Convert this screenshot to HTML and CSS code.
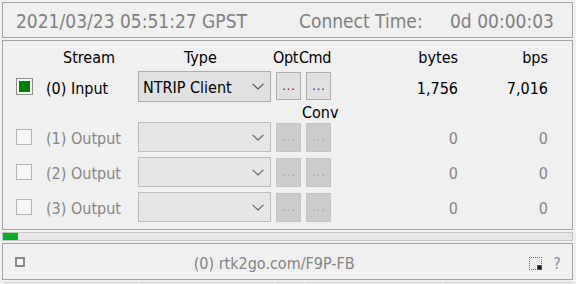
FILE: index.html
```html
<!DOCTYPE html>
<html>
<head>
<meta charset="utf-8">
<link rel="stylesheet" href="styles.css">
</head>
<body>
<div class="app">
  <div class="panel top">
    <span class="time">2021/03/23 05:51:27 GPST</span>
    <span class="ct">Connect Time:</span>
    <span class="elapsed">0d 00:00:03</span>
  </div>

  <div class="panel main">
    <div class="grid">
      <div class="h h-stream">Stream</div>
      <div class="h h-type">Type</div>
      <div class="h h-optcmd"><span class="opt">Opt</span><span>Cmd</span></div>
      <div class="h h-num c6">bytes</div>
      <div class="h h-num c7">bps</div>

      <div class="cb on r2"></div>
      <div class="lbl r2">(0) Input</div>
      <div class="combo r2"><span>NTRIP Client</span><svg width="12" height="7" viewBox="0 0 12 7"><path d="M0.5 0.8 L6 6 L11.5 0.8" stroke="#505050" stroke-width="1.1" fill="none"/></svg></div>
      <div class="btn r2 c4">...</div>
      <div class="btn r2 c5">...</div>
      <div class="num r2 c6">1,756</div>
      <div class="num r2 c7">7,016</div>

      <div class="conv">Conv</div>

      <div class="cb r4"></div>
      <div class="lbl dis r4">(1) Output</div>
      <div class="combo dis r4"><span></span><svg width="12" height="7" viewBox="0 0 12 7"><path d="M0.5 0.8 L6 6 L11.5 0.8" stroke="#606060" stroke-width="1.1" fill="none"/></svg></div>
      <div class="btn dis r4 c4">...</div>
      <div class="btn dis r4 c5">...</div>
      <div class="num dis r4 c6">0</div>
      <div class="num dis r4 c7">0</div>

      <div class="cb r5"></div>
      <div class="lbl dis r5">(2) Output</div>
      <div class="combo dis r5"><span></span><svg width="12" height="7" viewBox="0 0 12 7"><path d="M0.5 0.8 L6 6 L11.5 0.8" stroke="#606060" stroke-width="1.1" fill="none"/></svg></div>
      <div class="btn dis r5 c4">...</div>
      <div class="btn dis r5 c5">...</div>
      <div class="num dis r5 c6">0</div>
      <div class="num dis r5 c7">0</div>

      <div class="cb r6"></div>
      <div class="lbl dis r6">(3) Output</div>
      <div class="combo dis r6"><span></span><svg width="12" height="7" viewBox="0 0 12 7"><path d="M0.5 0.8 L6 6 L11.5 0.8" stroke="#606060" stroke-width="1.1" fill="none"/></svg></div>
      <div class="btn dis r6 c4">...</div>
      <div class="btn dis r6 c5">...</div>
      <div class="num dis r6 c6">0</div>
      <div class="num dis r6 c7">0</div>
    </div>
  </div>

  <div class="progress"><div class="fill" style="width:15px"></div></div>

  <div class="panel bottom">
    <span class="sq"></span>
    <span class="url">(0) rtk2go.com/F9P-FB</span>
    <svg class="winicon" width="13" height="13" viewBox="0 0 13 13">
      <g fill="#6a6a6a">
        <rect x="0" y="0" width="1" height="1"/><rect x="2" y="0" width="1" height="1"/><rect x="4" y="0" width="1" height="1"/><rect x="6" y="0" width="1" height="1"/><rect x="8" y="0" width="1" height="1"/><rect x="10" y="0" width="1" height="1"/><rect x="12" y="0" width="1" height="1"/>
        <rect x="0" y="2" width="1" height="1"/><rect x="0" y="4" width="1" height="1"/><rect x="0" y="6" width="1" height="1"/><rect x="0" y="8" width="1" height="1"/><rect x="0" y="10" width="1" height="1"/><rect x="0" y="12" width="1" height="1"/>
        <rect x="12" y="2" width="1" height="1"/><rect x="12" y="4" width="1" height="1"/><rect x="12" y="6" width="1" height="1"/>
        <rect x="2" y="12" width="1" height="1"/><rect x="4" y="12" width="1" height="1"/><rect x="6" y="12" width="1" height="1"/>
      </g>
      <rect x="8.5" y="8.5" width="4" height="4" fill="#111" stroke="#555" stroke-width="1"/>
    </svg>
    <span class="help">?</span>
  </div>

  <div class="status">
    <span class="seg s1"></span><span class="seg s2"></span><span class="seg s3"></span><span class="seg s4"></span><span class="seg s5"></span>
  </div>
</div>
</body>
</html>
```

FILE: styles.css
```css
html, body {
  margin: 0;
  padding: 0;
}
body {
  width: 576px;
  height: 284px;
  overflow: hidden;
  background: #f0f0f0;
  font-family: "DejaVu Sans Condensed", "DejaVu Sans", sans-serif;
  font-stretch: condensed;
  font-size: 16px;
  color: #000;
}
.app {
  padding: 2px 3px 0 2px;
}
.panel {
  border: 1px solid #a3a3a3;
  box-sizing: border-box;
}
.top {
  height: 36px;
  display: flex;
  align-items: center;
  color: #808080;
  font-size: 19px;
  padding-left: 13px;
  padding-top: 1px;
  margin-bottom: 2px;
}
.top .time { width: 283px; }
.top .ct { width: 151px; }

.main {
  height: 190px;
  padding: 0 0 2px 13px;
}
.grid {
  display: grid;
  grid-template-columns: 30px 92px 138px 30px 25px 127px 90px;
  grid-template-rows: 30px 31px 20px 35px 35px 35px;
  white-space: nowrap;
}
.h { grid-row: 1; align-self: center; padding-top: 3px; }
.h-stream { grid-column: 2; padding-left: 17px; }
.h-type { grid-column: 3; padding-left: 46px; }
.h-optcmd { grid-column: 4 / span 2; display: flex; margin-left: -3px; letter-spacing: -0.4px; }
.h-optcmd .opt { width: 31px; }
.h-num { text-align: right; }
.c4 { grid-column: 4; }
.c5 { grid-column: 5; }
.c6 { grid-column: 6; }
.c7 { grid-column: 7; }
.r2 { grid-row: 2; }
.r4 { grid-row: 4; }
.r5 { grid-row: 5; }
.r6 { grid-row: 6; }

.cb {
  grid-column: 1;
  width: 16px;
  height: 16px;
  box-sizing: border-box;
  border: 1px solid #b4b4b4;
  background: #f7f7f7;
  align-self: start;
  margin-top: 7px;
}
.cb.on {
  width: 17px;
  height: 17px;
  border-color: #8e8e8e;
  background: #008000;
  box-shadow: inset 0 0 0 2px #fafafa;
  align-self: center;
  margin-top: 0;
}
.lbl {
  grid-column: 2;
  align-self: start;
  line-height: 30px;
  padding-top: 2px;
}
.lbl.r2 { line-height: 31px; }
.dis { color: #858585; }

.combo {
  grid-column: 3;
  width: 133px;
  height: 30px;
  box-sizing: border-box;
  border: 1px solid #adadad;
  background: #e1e1e1;
  display: flex;
  align-items: center;
  justify-content: space-between;
  padding: 2px 6px 0 4px;
  align-self: start;
}
.combo svg { margin-top: -2px; }
.combo.r2 { height: 31px; }
.combo.dis {
  background: #e6e6e6;
  border-color: #bdbdbd;
}
.btn {
  width: 25px;
  height: 28px;
  box-sizing: border-box;
  border: 1px solid #adadad;
  background: #e1e1e1;
  align-self: start;
  margin-top: 1px;
  text-align: center;
  font-size: 12px;
  letter-spacing: 1px;
  text-indent: 1px;
  line-height: 27px;
  color: #301030;
}
.btn.dis {
  background: #cccccc;
  border-color: #c4c4c4;
  color: #a6a6a6;
  height: 29px;
  margin-top: 1px;
}
.num {
  text-align: right;
  align-self: start;
  line-height: 31px;
  padding-top: 2px;
}
.num.dis { line-height: 30px; }
.conv {
  grid-row: 3;
  grid-column: 5;
  margin-left: -4px;
  align-self: center;
  line-height: 20px;
  padding-top: 2px;
}

.progress {
  margin-top: 2px;
  height: 9px;
  box-sizing: border-box;
  border: 1px solid #c4c4c4;
  background: #e6e6e6;
}
.progress .fill {
  height: 100%;
  background: #06b025;
}

.bottom {
  margin-top: 2px;
  height: 37px;
  display: flex;
  align-items: center;
  padding: 0 11px 0 12px;
  color: #838383;
}
.sq {
  width: 10px;
  height: 10px;
  box-sizing: border-box;
  border: 2px solid #8a8a8a;
  background: #f4f4f4;
  margin-top: 1px;
}
.url {
  flex: 1;
  text-align: center;
  margin-left: -6px;
  padding-top: 3px;
}
.winicon { margin-top: 4px; margin-right: 11px; }
.help { color: #8a8aa6; padding-top: 3px; }

.status {
  margin-top: 2px;
  display: flex;
  height: 2px;
}
.seg {
  border-top: 1px solid #d4d4d4;
  border-left: 1px solid #ffffff;
  height: 1px;
}
.s1 { width: 135px; }
.s2 { width: 135px; }
.s3 { width: 30px; }
.s4 { width: 136px; }
.s5 { flex: 1; }
```
